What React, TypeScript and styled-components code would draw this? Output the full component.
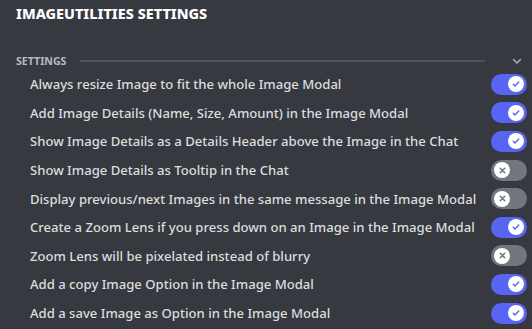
import React, { useState } from 'react';
import styled, { createGlobalStyle } from 'styled-components';

const GlobalStyle = createGlobalStyle`
  html, body {
    margin: 0;
    padding: 0;
    background: #36393f;
  }
  body {
    font-family: "Noto Sans", "Open Sans", sans-serif;
  }
`;

const Page = styled.div`
  width: 532px;
  height: 329px;
  background: #36393f;
  padding: 0 5px 0 16px;
  box-sizing: border-box;
  overflow: hidden;
`;

const Title = styled.h2`
  margin: 0;
  padding-top: 4px;
  height: 23px;
  font-size: 14.4px;
  font-weight: 800;
  color: #ffffff;
  text-transform: uppercase;
  line-height: 20px;
`;

const SectionHeader = styled.div`
  display: flex;
  align-items: center;
  height: 16px;
  margin-top: 26px;
  gap: 14px;
`;

const SectionLabel = styled.span`
  font-size: 10.6px;
  font-weight: 700;
  color: #b9bbbe;
  text-transform: uppercase;
`;

const Divider = styled.div`
  flex: 1;
  height: 1.5px;
  background: #4f545c;
`;

const Chevron = styled.svg`
  width: 12px;
  height: 12px;
  margin-left: 12px;
  margin-right: 4px;
`;

const List = styled.div`
  display: flex;
  flex-direction: column;
  margin-top: 1px;
  padding-left: 14px;
`;

const Row = styled.div`
  display: flex;
  align-items: center;
  justify-content: space-between;
  height: 28.6px;
`;

const Label = styled.span`
  font-size: 13.1px;
  font-weight: 500;
  color: #dcddde;
  white-space: nowrap;
`;

const Track = styled.button<{ $on: boolean }>`
  position: relative;
  width: 36px;
  height: 21px;
  border: none;
  border-radius: 11px;
  padding: 0;
  cursor: pointer;
  background: ${p => (p.$on ? '#5865f2' : '#72767d')};
  flex-shrink: 0;
`;

const Knob = styled.span<{ $on: boolean }>`
  position: absolute;
  top: 2.5px;
  left: ${p => (p.$on ? '17px' : '3px')};
  width: 16px;
  height: 16px;
  border-radius: 50%;
  background: #ffffff;
  display: flex;
  align-items: center;
  justify-content: center;
`;

const items = [
  { label: 'Always resize Image to fit the whole Image Modal', on: true },
  { label: 'Add Image Details (Name, Size, Amount) in the Image Modal', on: true },
  { label: 'Show Image Details as a Details Header above the Image in the Chat', on: true },
  { label: 'Show Image Details as Tooltip in the Chat', on: false },
  { label: 'Display previous/next Images in the same message in the Image Modal', on: false },
  { label: 'Create a Zoom Lens if you press down on an Image in the Image Modal', on: true },
  { label: 'Zoom Lens will be pixelated instead of blurry', on: false },
  { label: 'Add a copy Image Option in the Image Modal', on: true },
  { label: 'Add a save Image as Option in the Image Modal', on: true },
];

const Switch: React.FC<{ on: boolean; onToggle: () => void }> = ({ on, onToggle }) => (
  <Track $on={on} onClick={onToggle}>
    <Knob $on={on}>
      {on ? (
        <svg width="10" height="10" viewBox="0 0 20 20">
          <path d="M4.5 10.5l3.5 3.5 7.5-8" fill="none" stroke="#5865f2" strokeWidth="2.8" strokeLinecap="round" strokeLinejoin="round" />
        </svg>
      ) : (
        <svg width="9" height="9" viewBox="0 0 20 20">
          <path d="M5 5l10 10M15 5L5 15" fill="none" stroke="#72767d" strokeWidth="3.4" strokeLinecap="round" />
        </svg>
      )}
    </Knob>
  </Track>
);

const App: React.FC = () => {
  const [values, setValues] = useState(items.map(i => i.on));

  return (
    <>
      <GlobalStyle />
      <Page>
        <Title>ImageUtilities Settings</Title>
        <SectionHeader>
          <SectionLabel>Settings</SectionLabel>
          <Divider />
          <Chevron viewBox="0 0 24 24">
            <path d="M5 9l7 7 7-7" fill="none" stroke="#b9bbbe" strokeWidth="2.6" strokeLinecap="round" strokeLinejoin="round" />
          </Chevron>
        </SectionHeader>
        <List>
          {items.map((item, i) => (
            <Row key={item.label}>
              <Label>{item.label}</Label>
              <Switch
                on={values[i]}
                onToggle={() => setValues(v => v.map((x, j) => (j === i ? !x : x)))}
              />
            </Row>
          ))}
        </List>
      </Page>
    </>
  );
};

export default App;
